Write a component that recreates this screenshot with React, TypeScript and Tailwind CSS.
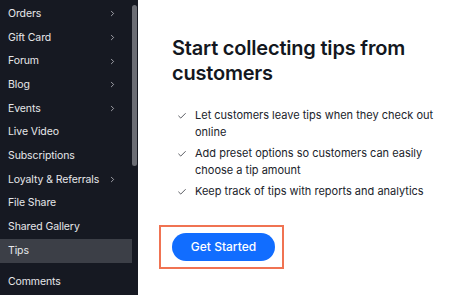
import { ChevronRight, Check } from "lucide-react";

const navItems: { label: string; arrow?: boolean; active?: boolean }[] = [
  { label: "Orders", arrow: true },
  { label: "Gift Card", arrow: true },
  { label: "Forum", arrow: true },
  { label: "Blog", arrow: true },
  { label: "Events", arrow: true },
  { label: "Live Video" },
  { label: "Subscriptions" },
  { label: "Loyalty & Referrals", arrow: true },
  { label: "File Share" },
  { label: "Shared Gallery" },
  { label: "Tips", active: true },
];

const bullets = [
  "Let customers leave tips when they check out online",
  "Add preset options so customers can easily choose a tip amount",
  "Keep track of tips with reports and analytics",
];

function Sidebar() {
  return (
    <aside className="flex h-full w-[138px] shrink-0 bg-[#161922]">
      <nav className="w-[132px] pt-[2px]">
        {navItems.map((item) => (
          <div
            key={item.label}
            className={`flex h-[23.7px] items-center justify-between pl-2 pr-[15px] text-[10.5px] tracking-[-0.1px] text-[#e6e7ea] ${
              item.active ? "bg-[#3c3f47]" : ""
            }`}
          >
            <span>{item.label}</span>
            {item.arrow && <ChevronRight size={9} strokeWidth={2} className="text-[#c9cad0]" />}
          </div>
        ))}
        <div className="mt-[7px] flex h-[23.7px] items-center pl-2 text-[10.5px] tracking-[-0.1px] text-[#e6e7ea]">
          Comments
        </div>
      </nav>
      <div className="w-[6px] pt-[5px]">
        <div className="h-[161px] w-[5px] rounded-full bg-[#6b6d74]" />
      </div>
    </aside>
  );
}

export default function App() {
  return (
    <div
      className="flex h-[295px] w-[474px] overflow-hidden bg-white"
      style={{ fontFamily: "Inter, 'Noto Sans', sans-serif" }}
    >
      <Sidebar />
      <main className="flex-1 pl-[34px] pt-[36px]">
        <h1 className="w-[280px] text-[20px] font-semibold leading-[25px] tracking-[-0.2px] text-[#131720]">
          Start collecting tips from customers
        </h1>
        <ul className="mt-[21px] flex w-[268px] flex-col gap-[4px]">
          {bullets.map((b) => (
            <li key={b} className="flex gap-[8px] text-[11px] leading-[17px] text-[#20232b]">
              <Check size={10} strokeWidth={1.8} className="mt-[4px] ml-[5px] shrink-0" />
              <span>{b}</span>
            </li>
          ))}
        </ul>
        <div className="mt-[25px] ml-[-13px] inline-flex border-2 border-[#f07352] py-[6px] pl-[11px] pr-[7px]">
          <button className="h-[28px] w-[103px] rounded-full bg-[#116dff] text-[12px] font-medium text-white">
            Get Started
          </button>
        </div>
      </main>
    </div>
  );
}
